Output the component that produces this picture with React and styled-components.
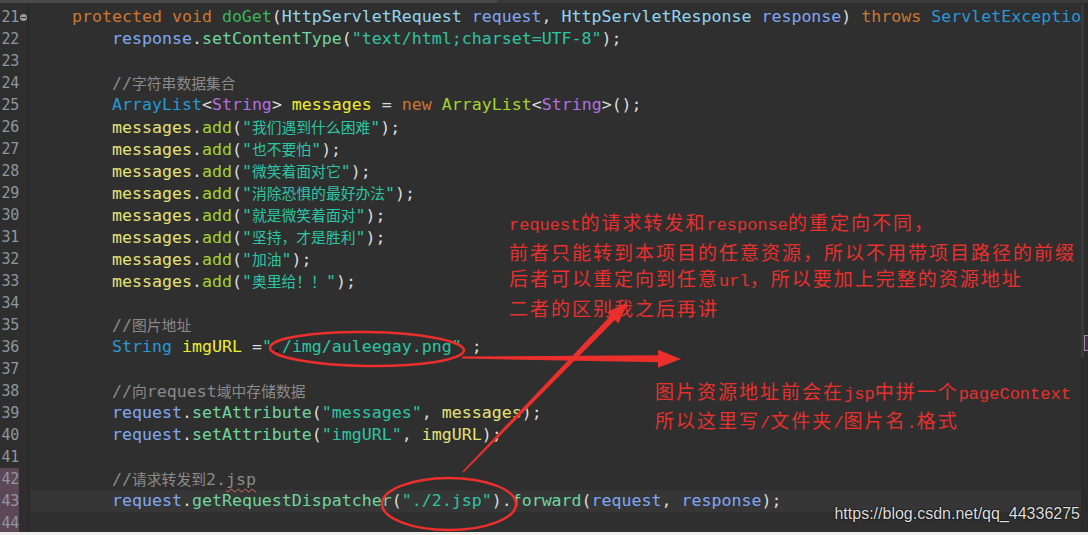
import React from "react";
import styled, { createGlobalStyle } from "styled-components";

const GlobalStyle = createGlobalStyle`
  html, body {
    margin: 0;
    padding: 0;
    background: #2f2f2f;
  }
  body {
    width: 1088px;
    height: 535px;
    overflow: hidden;
  }
`;

// token colours, roughly the eclipse dark theme in the shot
const colors = {
  kw: "#cc7832",
  decl: "#3ab55e",
  ptype: "#8fd8f0",
  param: "#7ea8f5",
  type: "#2699d8",
  gen: "#b26fe0",
  ctor: "#a2d62e",
  local: "#eeee2e",
  var: "#e3e278",
  call: "#a2d62e",
  meth: "#6cd79e",
  str: "#2cc5a3",
  cmt: "#8a8a8a",
  p: "#dcdcdc",
  dot: "#111111",
};

const Page = styled.div`
  position: relative;
  width: 1088px;
  height: 535px;
  display: flex;
  flex-direction: column;
  overflow: hidden;
  background: #2f2f2f;
`;

const TopBar = styled.div`
  height: 3px;
  display: flex;
  flex-shrink: 0;
`;

const TopSeg = styled.div`
  width: ${p => (p.$w ? `${p.$w}px` : "auto")};
  flex: ${p => (p.$w ? "none" : 1)};
  background: ${p => p.$bg};
`;

const Body = styled.div`
  flex: 1;
  display: flex;
  min-height: 0;
`;

const Gutter = styled.div`
  width: 28px;
  flex-shrink: 0;
  padding-top: 3px;
  border-right: 1px solid #262626;
  background: #2e2e2e;
`;

const GutterRow = styled.div`
  height: 22px;
  display: flex;
  align-items: center;
`;

const LineNo = styled.span`
  width: 19px;
  height: 22px;
  line-height: 22px;
  text-align: right;
  font-family: "DejaVu Sans Mono", monospace;
  font-size: 15px;
  color: #8e969e;
  letter-spacing: -0.3px;
  background: ${p => (p.$mark ? "#5b4756" : "transparent")};
`;

const Fold = styled.span`
  position: relative;
  width: 7px;
  height: 7px;
  margin-left: 1px;
  border-radius: 50%;
  background: #9c9c9c;
  &::after {
    content: "";
    position: absolute;
    left: 1px;
    right: 1px;
    top: 3px;
    height: 1px;
    background: #2e2e2e;
  }
`;

const Code = styled.div`
  flex: 1;
  min-width: 0;
  overflow: hidden;
  padding: 3px 0 0 2px;
`;

const Row = styled.div`
  height: 22px;
  line-height: 22px;
  white-space: pre;
  padding-left: ${p => 1 + p.$ind * 40}px;
  font-family: "DejaVu Sans Mono", monospace;
  font-size: 16.6px;
  color: #dcdcdc;
  background: ${p => (p.$current ? "#363636" : "transparent")};
`;

const Tok = styled.span`
  color: ${p => colors[p.$t] || "#dcdcdc"};
`;

const Cjk = styled.span`
  font-family: "Noto Sans CJK SC", sans-serif;
  font-size: 14.8px;
`;

const Spell = styled.span`
  text-decoration: underline wavy #d86a6a;
  text-underline-offset: 3px;
  text-decoration-thickness: 1px;
`;

const Scrollbar = styled.div`
  width: 7px;
  flex-shrink: 0;
  display: flex;
  background: #2b2b2b;
`;

const Thumb = styled.div`
  width: 3px;
  height: 353px;
  margin-top: 2px;
  background: #393939;
`;

const Ruler = styled.div`
  flex: 1;
  padding-top: 332px;
`;

const RulerMark = styled.div`
  height: 14px;
  border: 1px solid #a584a8;
  border-right: none;
  background: #3a3340;
`;

const BottomBar = styled.div`
  height: 3px;
  flex-shrink: 0;
  background: #f0f0f0;
`;

const Overlay = styled.svg`
  position: absolute;
  left: 0;
  top: 0;
  pointer-events: none;
`;

const Note = styled.div`
  position: absolute;
  left: ${p => p.$left}px;
  top: ${p => p.$top}px;
  line-height: ${p => p.$lh}px;
  white-space: pre;
  color: #e8302e;
  font-family: "Noto Sans CJK SC", sans-serif;
  font-size: 19px;
  letter-spacing: 2px;
  font-weight: 400;
`;

const NoteLatin = styled.span`
  font-family: "Liberation Mono", monospace;
  font-size: 17px;
  letter-spacing: 0;
`;

const Watermark = styled.div`
  position: absolute;
  right: 8px;
  top: 504px;
  font-family: "Liberation Sans", Arial, sans-serif;
  font-size: 16px;
  line-height: 20px;
  color: #dedede;
  text-shadow: 0 0 2px #000, 0 0 1px #000;
`;

const CJK_RE = /([\u3000-\u303f\u4e00-\u9fff\uff00-\uffef]+)/;

const splitRuns = (text, Wrap, matchCjk) =>
  text.split(CJK_RE).map((part, i) => {
    if (!part) return null;
    const isCjk = CJK_RE.test(part);
    return isCjk === matchCjk ? <Wrap key={i}>{part}</Wrap> : <span key={i}>{part}</span>;
  });

const msg = text => [
  ["var", "messages"],
  ["p", "."],
  ["call", "add"],
  ["p", "("],
  ["str", `"${text}"`],
  ["p", ");"],
];

const lines = [
  {
    n: 21,
    ind: 1,
    fold: true,
    t: [
      ["kw", "protected"], ["p", " "], ["kw", "void"], ["p", " "], ["decl", "doGet"],
      ["p", "("], ["ptype", "HttpServletRequest"], ["p", " "], ["param", "request"],
      ["p", ", "], ["ptype", "HttpServletResponse"], ["p", " "], ["param", "response"],
      ["p", ") "], ["kw", "throws"], ["p", " "], ["type", "ServletExceptio"],
    ],
  },
  {
    n: 22,
    ind: 2,
    t: [
      ["param", "response"], ["p", "."], ["meth", "setContentType"], ["p", "("],
      ["str", '"text/html;charset=UTF-8"'], ["p", ");"],
    ],
  },
  { n: 23 },
  { n: 24, ind: 2, t: [["cmt", "//字符串数据集合"]] },
  {
    n: 25,
    ind: 2,
    t: [
      ["type", "ArrayList"], ["p", "<"], ["gen", "String"], ["p", "> "], ["local", "messages"],
      ["p", " = "], ["kw", "new"], ["p", " "], ["ctor", "ArrayList"], ["p", "<"],
      ["gen", "String"], ["p", ">();"],
    ],
  },
  { n: 26, ind: 2, t: msg("我们遇到什么困难") },
  { n: 27, ind: 2, t: msg("也不要怕") },
  { n: 28, ind: 2, t: msg("微笑着面对它") },
  { n: 29, ind: 2, t: msg("消除恐惧的最好办法") },
  { n: 30, ind: 2, t: msg("就是微笑着面对") },
  { n: 31, ind: 2, t: msg("坚持，才是胜利") },
  { n: 32, ind: 2, t: msg("加油") },
  { n: 33, ind: 2, t: msg("奥里给！！") },
  { n: 34 },
  { n: 35, ind: 2, t: [["cmt", "//图片地址"]] },
  {
    n: 36,
    ind: 2,
    t: [
      ["type", "String"], ["p", " "], ["local", "imgURL"], ["p", " ="], ["str", '"'],
      ["dot", "."], ["str", '/img/auleegay.png"'], ["p", " ;"],
    ],
  },
  { n: 37 },
  { n: 38, ind: 2, t: [["cmt", "//向request域中存储数据"]] },
  {
    n: 39,
    ind: 2,
    t: [
      ["param", "request"], ["p", "."], ["meth", "setAttribute"], ["p", "("],
      ["str", '"messages"'], ["p", ", "], ["var", "messages"], ["p", ");"],
    ],
  },
  {
    n: 40,
    ind: 2,
    t: [
      ["param", "request"], ["p", "."], ["meth", "setAttribute"], ["p", "("],
      ["str", '"imgURL"'], ["p", ", "], ["var", "imgURL"], ["p", ");"],
    ],
  },
  { n: 41 },
  { n: 42, ind: 2, mark: true, t: [["cmt", "//请求转发到2."], ["spell", "jsp"]] },
  {
    n: 43,
    ind: 2,
    mark: true,
    current: true,
    t: [
      ["param", "request"], ["p", "."], ["meth", "getRequestDispatcher"], ["p", "("],
      ["str", '"./2.jsp"'], ["p", ")."], ["meth", "forward"], ["p", "("], ["param", "request"],
      ["p", ", "], ["param", "response"], ["p", ");"],
    ],
  },
  { n: 44, mark: true },
];

const CodeLine = ({ line }) => (
  <Row $ind={line.ind || 0} $current={line.current}>
    {(line.t || []).map(([t, text], i) =>
      t === "spell" ? (
        <Tok key={i} $t="cmt">
          <Spell>{text}</Spell>
        </Tok>
      ) : (
        <Tok key={i} $t={t}>
          {splitRuns(text, Cjk, true)}
        </Tok>
      )
    )}
    {!line.t && " "}
  </Row>
);

// tapered hand-drawn arrow: thin tail, thicker shaft near the head
function arrowPoints([tx, ty], [px, py], w0, w1, hl, hw) {
  const dx = px - tx,
    dy = py - ty,
    len = Math.hypot(dx, dy);
  const ux = dx / len,
    uy = dy / len,
    nx = -uy,
    ny = ux;
  const bx = px - ux * hl,
    by = py - uy * hl;
  return [
    [tx + nx * w0, ty + ny * w0],
    [bx + nx * w1, by + ny * w1],
    [bx + nx * hw, by + ny * hw],
    [px, py],
    [bx - nx * hw, by - ny * hw],
    [bx - nx * w1, by - ny * w1],
    [tx - nx * w0, ty - ny * w0],
  ]
    .map(pt => pt.map(v => v.toFixed(1)).join(","))
    .join(" ");
}

const RED = "#ea2f2d";

const Annotations = () => (
  <Overlay width="1088" height="535" viewBox="0 0 1088 535">
    <ellipse cx="367" cy="349" rx="97" ry="17" fill="none" stroke={RED} strokeWidth="2.6" transform="rotate(0.8 367 349)" />
    <ellipse cx="449" cy="504" rx="67" ry="26" fill="none" stroke={RED} strokeWidth="2.6" />
    <polygon points={arrowPoints([462, 357.5], [681, 359], 1, 3.5, 23, 9)} fill={RED} />
    <polygon points={arrowPoints([463, 472], [628, 302], 0.9, 3, 22, 8)} fill={RED} />
  </Overlay>
);

const NoteText = ({ children }) => splitRuns(children, NoteLatin, false);

const noteA = [
  "request的请求转发和response的重定向不同，",
  "前者只能转到本项目的任意资源，所以不用带项目路径的前缀",
  "后者可以重定向到任意url，所以要加上完整的资源地址",
  "二者的区别我之后再讲",
];

const noteB = ["图片资源地址前会在jsp中拼一个pageContext", "所以这里写/文件夹/图片名.格式"];

export default function App() {
  return (
    <>
      <GlobalStyle />
      <Page>
        <TopBar>
          <TopSeg $w={497} $bg="#4a4a4a" />
          <TopSeg $bg="#3a3a3a" />
        </TopBar>
        <Body>
          <Gutter>
            {lines.map(l => (
              <GutterRow key={l.n}>
                <LineNo $mark={l.mark}>{l.n}</LineNo>
                {l.fold && <Fold />}
              </GutterRow>
            ))}
          </Gutter>
          <Code>
            {lines.map(l => (
              <CodeLine key={l.n} line={l} />
            ))}
          </Code>
          <Scrollbar>
            <Thumb />
            <Ruler>
              <RulerMark />
            </Ruler>
          </Scrollbar>
        </Body>
        <BottomBar />
        <Annotations />
        <Note $left={509} $top={209} $lh={26}>
          {noteA.map(t => (
            <div key={t}>
              <NoteText>{t}</NoteText>
            </div>
          ))}
        </Note>
        <Note $left={655} $top={378} $lh={25}>
          {noteB.map(t => (
            <div key={t}>
              <NoteText>{t}</NoteText>
            </div>
          ))}
        </Note>
        <Watermark>https://blog.csdn.net/qq_44336275</Watermark>
      </Page>
    </>
  );
}
